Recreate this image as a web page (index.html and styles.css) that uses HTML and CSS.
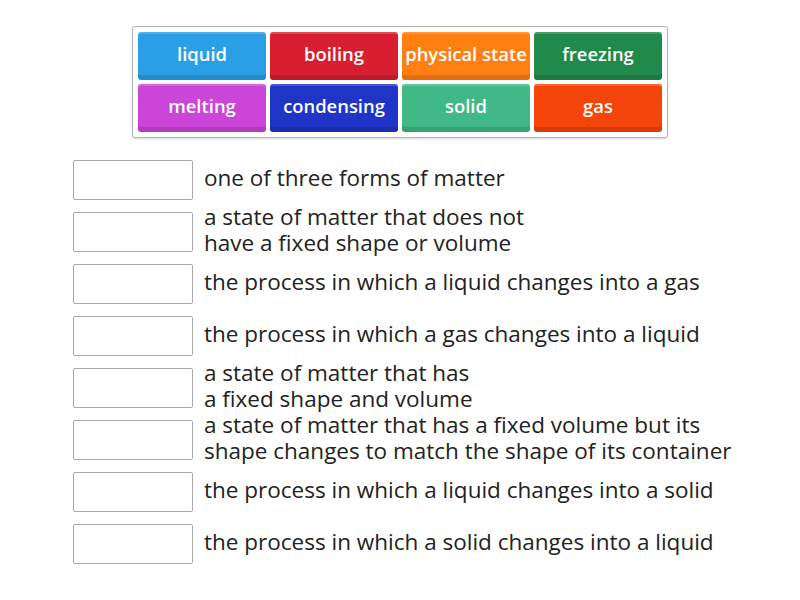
FILE: index.html
```html
<!DOCTYPE html>
<html>
<head>
<meta charset="utf-8">
<link rel="stylesheet" href="styles.css">
</head>
<body>
<div class="page">
  <div class="bank">
    <div class="tile t-blue">liquid</div>
    <div class="tile t-red">boiling</div>
    <div class="tile t-orange">physical state</div>
    <div class="tile t-green">freezing</div>
    <div class="tile t-purple">melting</div>
    <div class="tile t-navy">condensing</div>
    <div class="tile t-teal">solid</div>
    <div class="tile t-redorange">gas</div>
  </div>
  <div class="rows">
    <div class="row"><div class="slot"></div><div class="def">one of three forms of matter</div></div>
    <div class="row"><div class="slot"></div><div class="def">a state of matter that does not<br>have a fixed shape or volume</div></div>
    <div class="row"><div class="slot"></div><div class="def">the process in which a liquid changes into a gas</div></div>
    <div class="row"><div class="slot"></div><div class="def">the process in which a gas changes into a liquid</div></div>
    <div class="row"><div class="slot"></div><div class="def">a state of matter that has<br>a fixed shape and volume</div></div>
    <div class="row"><div class="slot"></div><div class="def">a state of matter that has a fixed volume but its<br>shape changes to match the shape of its container</div></div>
    <div class="row"><div class="slot"></div><div class="def">the process in which a liquid changes into a solid</div></div>
    <div class="row"><div class="slot"></div><div class="def">the process in which a solid changes into a liquid</div></div>
  </div>
</div>
</body>
</html>
```
FILE: styles.css
```css
html, body {
  margin: 0;
  padding: 0;
  background: #ffffff;
}
body {
  font-family: "Open Sans", "Liberation Sans", sans-serif;
  color: #222222;
}
.page {
  width: 800px;
  height: 600px;
  padding-top: 26px;
  box-sizing: border-box;
}
.bank {
  width: 536px;
  margin: 0 auto;
  box-sizing: border-box;
  border: 1px solid #b4b4b4;
  border-radius: 3px;
  padding: 5px;
  display: grid;
  grid-template-columns: repeat(4, 128px);
  grid-auto-rows: 48px;
  gap: 4px;
  box-shadow: 0 1px 2px rgba(0,0,0,0.15);
}
.tile {
  border-radius: 3px;
  color: #ffffff;
  font-weight: 600;
  font-size: 18.4px;
  display: flex;
  align-items: center;
  justify-content: center;
  padding-bottom: 5px;
  box-sizing: border-box;
  white-space: nowrap;
  box-shadow: inset 0 -5px 0 rgba(0,0,0,0.12), inset 0 2px 0 rgba(255,255,255,0.18);
}
.t-blue { background: #2b9fe6; }
.t-red { background: #d81f31; }
.t-orange { background: #ff7f12; }
.t-green { background: #1f8a4a; }
.t-purple { background: #cb45d8; }
.t-navy { background: #2034c8; }
.t-teal { background: #40b986; }
.t-redorange { background: #f5450b; }
.rows {
  margin-top: 22px;
  padding-left: 73px;
  display: flex;
  flex-direction: column;
  gap: 12px;
}
.row {
  height: 40px;
  display: flex;
  align-items: center;
}
.slot {
  width: 120px;
  height: 40px;
  box-sizing: border-box;
  border: 1px solid #aaaaaa;
  border-radius: 2px;
  background: #ffffff;
  flex: none;
}
.def {
  margin-left: 11px;
  font-size: 22.5px;
  line-height: 25.5px;
  margin-top: -5px;
  white-space: nowrap;
}
```
